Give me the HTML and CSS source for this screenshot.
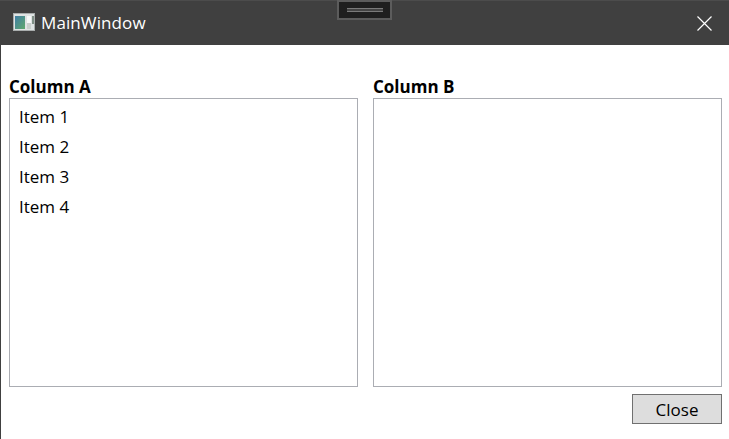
FILE: index.html
```html
<!DOCTYPE html>
<html lang="en">
<head>
  <meta charset="UTF-8">
  <title>MainWindow</title>
  <link rel="stylesheet" href="styles.css">
</head>
<body>
  <div class="window">
    <div class="titlebar">
      <svg class="app-icon" width="22" height="18" viewBox="0 0 22 18">
        <defs>
          <linearGradient id="pane" x1="0" y1="0" x2="1" y2="1">
            <stop offset="0" stop-color="#3f7ea6"/>
            <stop offset="1" stop-color="#5fa86c"/>
          </linearGradient>
        </defs>
        <rect x="0.5" y="0.5" width="21" height="17" fill="#dfe3e3" stroke="#a9adad"/>
        <rect x="2" y="3" width="10" height="13" fill="url(#pane)"/>
        <rect x="14" y="3" width="4" height="13" fill="#c9cfcc"/>
        <rect x="14" y="3" width="4" height="7" fill="#f6f8f8"/>
        <rect x="19" y="3" width="2" height="8" fill="#7f8f86"/>
      </svg>
      <span class="title">MainWindow</span>
      <svg class="close-icon" width="15" height="15" viewBox="0 0 15 15">
        <path d="M0.5 0.5 L14.5 14.5 M14.5 0.5 L0.5 14.5" stroke="#fff" stroke-width="1.2" fill="none"/>
      </svg>
      <!-- debug toolbar handle -->
      <div class="debug-bar"><div class="debug-grip"></div></div>
    </div>
    <div class="content">
      <div class="columns">
        <div class="column">
          <div class="column-title">Column A</div>
          <ul class="listbox">
            <li>Item 1</li>
            <li>Item 2</li>
            <li>Item 3</li>
            <li>Item 4</li>
          </ul>
        </div>
        <div class="column">
          <div class="column-title">Column B</div>
          <ul class="listbox"></ul>
        </div>
      </div>
      <div class="actions">
        <button class="close-btn">Close</button>
      </div>
    </div>
  </div>
</body>
</html>
```

FILE: styles.css
```css
* { box-sizing: border-box; margin: 0; padding: 0; }
html, body { height: 100%; }
body {
  font-family: "Open Sans", "Noto Sans", sans-serif;
  background: #fff;
  color: #000;
  overflow: hidden;
}

/* Window */
.window {
  height: 439px;
  border-left: 1px solid #404040;
  display: flex;
  flex-direction: column;
}

/* Title bar */
.titlebar {
  height: 45px;
  margin-left: -1px;
  background: #404040;
  border-top: 1px solid #4c4c4c;
  display: flex;
  align-items: center;
  padding: 0 17px 0 13px;
  position: relative;
}
.app-icon { margin-right: 6px; margin-top: -3px; }
.title {
  flex: 1;
  color: #fff;
  font-size: 17px;
  letter-spacing: 0.1px;
  margin-top: -1px;
}
.debug-bar {
  position: absolute;
  left: 337px;
  top: -1px;
  width: 55px;
  height: 20px;
  background: #1f1f1f;
  border: 2px solid #5c5c5c;
  display: flex;
  align-items: center;
  justify-content: center;
}
.debug-grip {
  width: 36px;
  height: 4px;
  border-top: 1px solid #7a7a7a;
  border-bottom: 1px solid #7a7a7a;
  background: #444;
}

/* Content */
.content {
  flex: 1;
  padding: 30px 7px 15px 8px;
  display: flex;
  flex-direction: column;
}
.columns {
  display: flex;
  gap: 15px;
}
.column { width: 349px; }
.column-title {
  font-size: 17px;
  font-weight: 700;
  line-height: 23px;
}
.listbox {
  list-style: none;
  height: 289px;
  border: 1px solid #abadb3;
  padding: 3px 0 0 9px;
}
.listbox li {
  font-size: 17px;
  line-height: 30px;
}

/* Footer */
.actions {
  display: flex;
  justify-content: flex-end;
  margin-top: 7px;
}
.close-btn {
  width: 90px;
  height: 30px;
  font-family: inherit;
  font-size: 17px;
  background: #dddddd;
  border: 1px solid #707070;
  color: #000;
}
```
